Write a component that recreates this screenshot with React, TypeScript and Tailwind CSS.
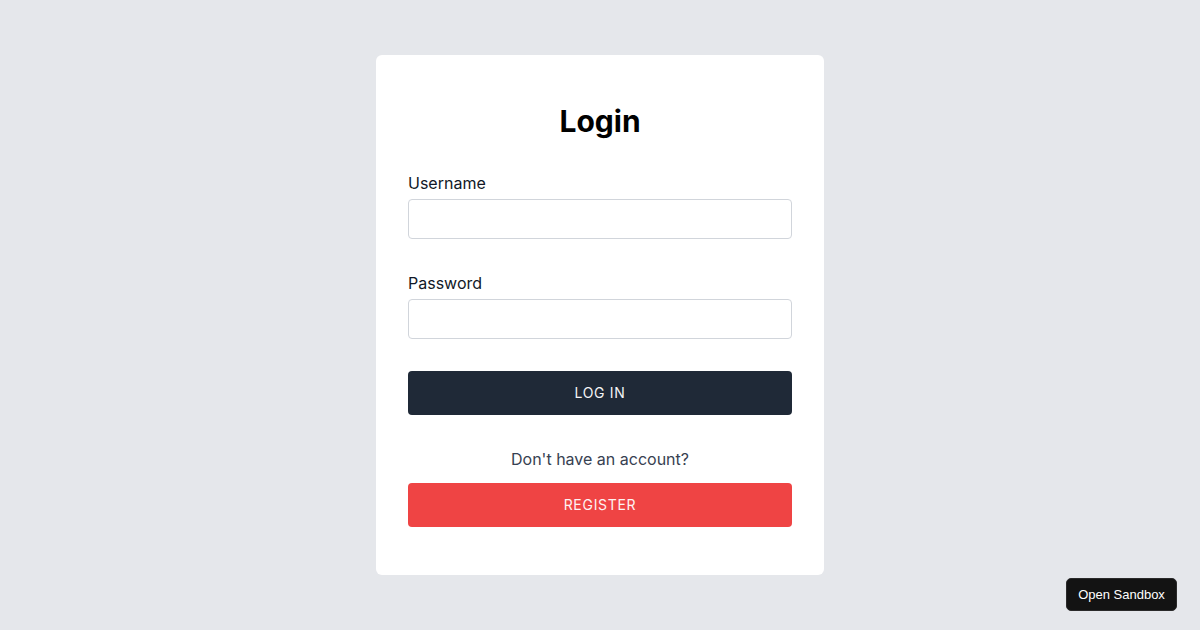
import React from "react";

export default function App() {
  return (
    <div
      className="relative min-h-screen bg-[#e5e7eb] flex items-center justify-center"
      style={{ fontFamily: "Inter, 'Noto Sans', sans-serif" }}
    >
      <div className="w-[448px] bg-white rounded-md px-8 pt-12 pb-12">
        <h1 className="text-[30px] leading-[36px] font-bold text-black text-center mb-8">
          Login
        </h1>
        <div className="mb-8">
          <label className="block text-base leading-6 text-[#111827] mb-1">Username</label>
          <input
            type="text"
            className="block w-full h-10 border border-[#d1d5db] rounded px-3 outline-none bg-white"
          />
        </div>
        <div className="mb-8">
          <label className="block text-base leading-6 text-[#111827] mb-1">Password</label>
          <input
            type="password"
            className="block w-full h-10 border border-[#d1d5db] rounded px-3 outline-none bg-white"
          />
        </div>
        <button className="block w-full h-11 rounded bg-[#1f2937] text-[#f3f4f6] text-sm uppercase tracking-wider">
          Log in
        </button>
        <p className="mt-8 text-center text-base leading-6 text-[#374151]">
          Don't have an account?
        </p>
        <button className="mt-3 block w-full h-11 rounded bg-[#ef4444] text-[#fef2f2] text-sm uppercase tracking-wider">
          Register
        </button>
      </div>
      <button
        className="fixed right-[23px] bottom-[19px] h-[33px] w-[111px] flex items-center justify-center rounded-[5px] bg-[#131313] border border-[#2a2a2a] text-white text-[13px]"
        style={{ fontFamily: "'Liberation Sans', Arial, sans-serif" }}
      >
        Open Sandbox
      </button>
    </div>
  );
}
